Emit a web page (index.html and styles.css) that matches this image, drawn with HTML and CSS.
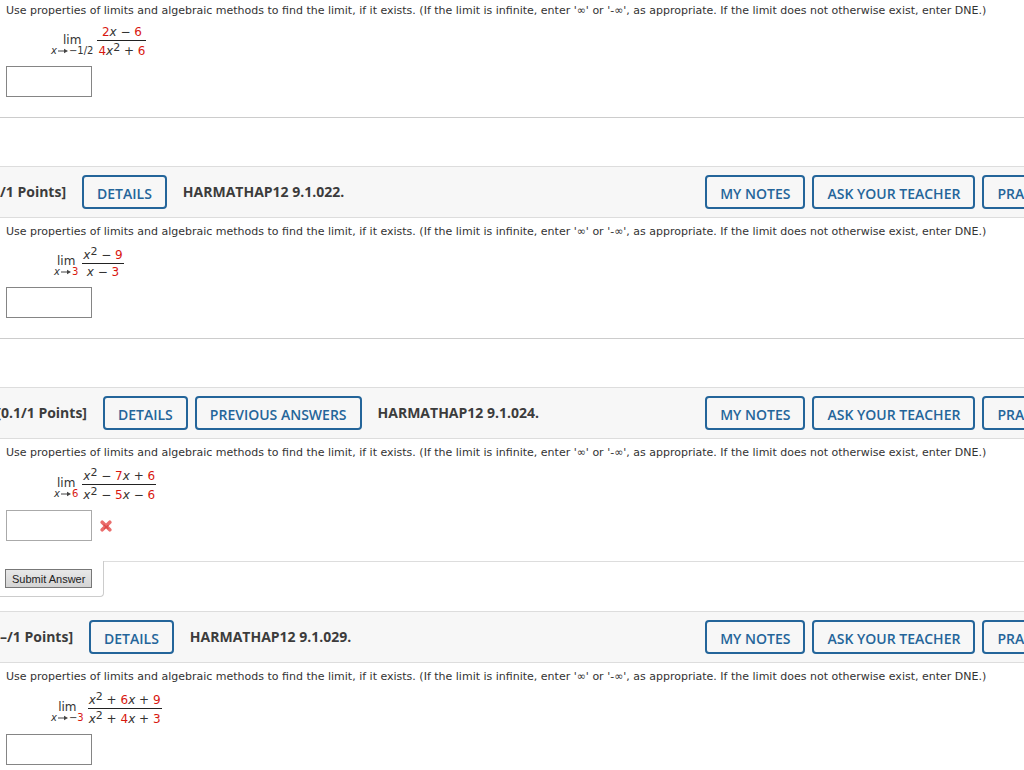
FILE: index.html
```
<!DOCTYPE html>
<html lang="en">
<head>
    <meta charset="UTF-8">
    <meta name="viewport" content="width=device-width, initial-scale=1.0">
    <title>Homework - Limits</title>
    <link rel="stylesheet" href="styles.css">
</head>
<body>
    <svg class="defs" width="0" height="0" aria-hidden="true">
        <symbol id="arrow" viewBox="0 0 10 6">
            <path d="M0 3H8" stroke="#444" stroke-width="1" fill="none"/>
            <path d="M6 0.8L10 3L6 5.2Z" fill="#444"/>
        </symbol>
    </svg>

    <main class="page">
        <section class="question">
            <div class="question-body first">
                <p class="prompt">Use properties of limits and algebraic methods to find the limit, if it exists. (If the limit is infinite, enter '∞' or '-∞', as appropriate. If the limit does not otherwise exist, enter DNE.)</p>
                <div class="math">
                    <div class="lim">
                        <span>lim</span>
                        <span class="sub"><i>x</i><svg class="arrow" aria-hidden="true"><use href="#arrow"/></svg>−1/2</span>
                    </div>
                    <div class="frac">
                        <div class="num"><b>2</b><i>x</i> − <b>6</b></div>
                        <div class="den"><b>4</b><i>x</i><sup>2</sup> + <b>6</b></div>
                    </div>
                </div>
                <div class="answer">
                    <input type="text" class="answer-box" aria-label="Answer">
                </div>
            </div>
        </section>

        <section class="question">
            <header class="question-header">
                <span class="points">/1 Points]</span>
                <button type="button" class="btn">DETAILS</button>
                <h2 class="title">HARMATHAP12 9.1.022.</h2>
                <div class="actions">
                    <button type="button" class="btn">MY NOTES</button>
                    <button type="button" class="btn">ASK YOUR TEACHER</button>
                    <button type="button" class="btn">PRACTICE ANOTHER</button>
                </div>
            </header>
            <div class="question-body">
                <p class="prompt">Use properties of limits and algebraic methods to find the limit, if it exists. (If the limit is infinite, enter '∞' or '-∞', as appropriate. If the limit does not otherwise exist, enter DNE.)</p>
                <div class="math short">
                    <div class="lim">
                        <span>lim</span>
                        <span class="sub"><i>x</i><svg class="arrow" aria-hidden="true"><use href="#arrow"/></svg><b>3</b></span>
                    </div>
                    <div class="frac">
                        <div class="num"><i>x</i><sup>2</sup> − <b>9</b></div>
                        <div class="den"><i>x</i> − <b>3</b></div>
                    </div>
                </div>
                <div class="answer">
                    <input type="text" class="answer-box" aria-label="Answer">
                </div>
            </div>
        </section>

        <section class="question">
            <header class="question-header">
                <span class="points clipped">[0.1/1 Points]</span>
                <button type="button" class="btn">DETAILS</button>
                <button type="button" class="btn">PREVIOUS ANSWERS</button>
                <h2 class="title">HARMATHAP12 9.1.024.</h2>
                <div class="actions">
                    <button type="button" class="btn">MY NOTES</button>
                    <button type="button" class="btn">ASK YOUR TEACHER</button>
                    <button type="button" class="btn">PRACTICE ANOTHER</button>
                </div>
            </header>
            <div class="question-body open">
                <p class="prompt">Use properties of limits and algebraic methods to find the limit, if it exists. (If the limit is infinite, enter '∞' or '-∞', as appropriate. If the limit does not otherwise exist, enter DNE.)</p>
                <div class="math short">
                    <div class="lim">
                        <span>lim</span>
                        <span class="sub"><i>x</i><svg class="arrow" aria-hidden="true"><use href="#arrow"/></svg><b>6</b></span>
                    </div>
                    <div class="frac">
                        <div class="num"><i>x</i><sup>2</sup> − <b>7</b><i>x</i> + <b>6</b></div>
                        <div class="den"><i>x</i><sup>2</sup> − <b>5</b><i>x</i> − <b>6</b></div>
                    </div>
                </div>
                <div class="answer">
                    <input type="text" class="answer-box graded" aria-label="Answer">
                    <svg class="wrong" viewBox="0 0 12 12" role="img" aria-label="Incorrect">
                        <path d="M2.2 2.2L9.8 9.8M9.8 2.2L2.2 9.8" stroke="#ea6d6c" stroke-width="3.6" stroke-linecap="round"/>
                        <path d="M4 5L8 8.5M8 5.5L4.5 8.5" stroke="#dc4a4a" stroke-width="1.4" stroke-linecap="round"/>
                    </svg>
                </div>
            </div>
            <div class="submit-row">
                <div class="submit-tab">
                    <button type="submit" class="submit-btn">Submit Answer</button>
                </div>
                <div class="submit-rest"></div>
            </div>
        </section>

        <section class="question">
            <header class="question-header">
                <span class="points">–/1 Points]</span>
                <button type="button" class="btn">DETAILS</button>
                <h2 class="title">HARMATHAP12 9.1.029.</h2>
                <div class="actions">
                    <button type="button" class="btn">MY NOTES</button>
                    <button type="button" class="btn">ASK YOUR TEACHER</button>
                    <button type="button" class="btn">PRACTICE ANOTHER</button>
                </div>
            </header>
            <div class="question-body open">
                <p class="prompt">Use properties of limits and algebraic methods to find the limit, if it exists. (If the limit is infinite, enter '∞' or '-∞', as appropriate. If the limit does not otherwise exist, enter DNE.)</p>
                <div class="math">
                    <div class="lim">
                        <span>lim</span>
                        <span class="sub"><i>x</i><svg class="arrow" aria-hidden="true"><use href="#arrow"/></svg>−<b>3</b></span>
                    </div>
                    <div class="frac">
                        <div class="num"><i>x</i><sup>2</sup> + <b>6</b><i>x</i> + <b>9</b></div>
                        <div class="den"><i>x</i><sup>2</sup> + <b>4</b><i>x</i> + <b>3</b></div>
                    </div>
                </div>
                <div class="answer">
                    <input type="text" class="answer-box" aria-label="Answer">
                </div>
            </div>
        </section>
    </main>
</body>
</html>
```

FILE: styles.css
```
* {
    margin: 0;
    padding: 0;
    box-sizing: border-box;
}

body {
    background-color: #fff;
    color: #333;
    font-family: Verdana, "DejaVu Sans", sans-serif;
    font-size: 12px;
    line-height: 16px;
    overflow-x: hidden;
}

.defs {
    display: block;
}

/* the header bars run on past the right edge of the window */
.page {
    margin-right: -123px;
}

.question-header {
    display: flex;
    align-items: center;
    gap: 7px;
    height: 52px;
    background-color: #f7f7f7;
    border-top: 1px solid #ddd;
    border-bottom: 1px solid #ddd;
    font-family: "Open Sans", sans-serif;
    white-space: nowrap;
}

.points, .title {
    color: #3c3c3c;
    font-size: 14px;
    font-weight: 700;
}

.points {
    margin-right: 9px;
}

.points.clipped {
    display: flex;
    justify-content: flex-end;
    width: 87px;
    overflow: hidden;
}

.title {
    margin-left: 9px;
}

.btn {
    height: 34px;
    padding: 2px 13px 0;
    background-color: transparent;
    border: 2px solid #24659a;
    border-radius: 4px;
    color: #24659a;
    font-family: inherit;
    font-size: 14px;
    font-weight: 600;
    white-space: nowrap;
    cursor: pointer;
}

.btn:hover {
    background-color: #e8f1f8;
}

.actions {
    display: flex;
    gap: 7px;
    margin-left: auto;
}

.question-body {
    padding: 5px 6px 20px;
    margin-bottom: 48px;
    border-bottom: 1px solid #ccc;
}

.question-body.first {
    padding-top: 2px;
}

.question-body.open {
    margin-bottom: 0;
    border-bottom: none;
}

.prompt {
    font-size: 11px;
    line-height: 18px;
    white-space: nowrap;
}

.math {
    display: flex;
    align-items: center;
    gap: 4px;
    margin: 4px 0 7px;
    padding-left: 45px;
}

.math.short {
    padding-left: 48px;
}

.math b {
    color: #d8170f;
    font-weight: normal;
}

.lim {
    display: flex;
    flex-direction: column;
    align-items: center;
    padding-top: 8px;
    line-height: 11px;
}

.sub {
    font-size: 10px;
    line-height: 10px;
    white-space: nowrap;
}

.arrow {
    width: 10px;
    height: 6px;
    margin: 0 1px;
}

.frac {
    text-align: center;
    white-space: nowrap;
}

.num, .den {
    padding: 0 1px;
}

.num {
    border-bottom: 1px solid #222;
}

.frac sup {
    font-size: 11px;
    line-height: 14px;
    vertical-align: 4px;
}

.answer {
    display: flex;
    align-items: center;
    gap: 8px;
}

.answer-box {
    width: 86px;
    height: 31px;
    padding: 4px;
    background-color: #fff;
    border: 1px solid #858585;
    font-family: inherit;
    font-size: 12px;
}

.answer-box.graded {
    border-color: #aaa;
}

.wrong {
    width: 12px;
    height: 12px;
}

.submit-row {
    display: flex;
    margin-bottom: 14px;
}

.submit-tab {
    padding: 8px 11px 8px 5px;
    border-right: 1px solid #ccc;
    border-bottom: 1px solid #ccc;
    border-bottom-right-radius: 4px;
}

.submit-rest {
    flex: 1;
    border-top: 1px solid #ddd;
}

.submit-btn {
    display: block;
    height: 19px;
    padding: 0 6px;
    background: linear-gradient(#e8e8e8, #d4d4d4);
    border: 1px solid #777;
    color: #222;
    font-family: Arial, "Liberation Sans", sans-serif;
    font-size: 11px;
    white-space: nowrap;
    cursor: pointer;
}
```
